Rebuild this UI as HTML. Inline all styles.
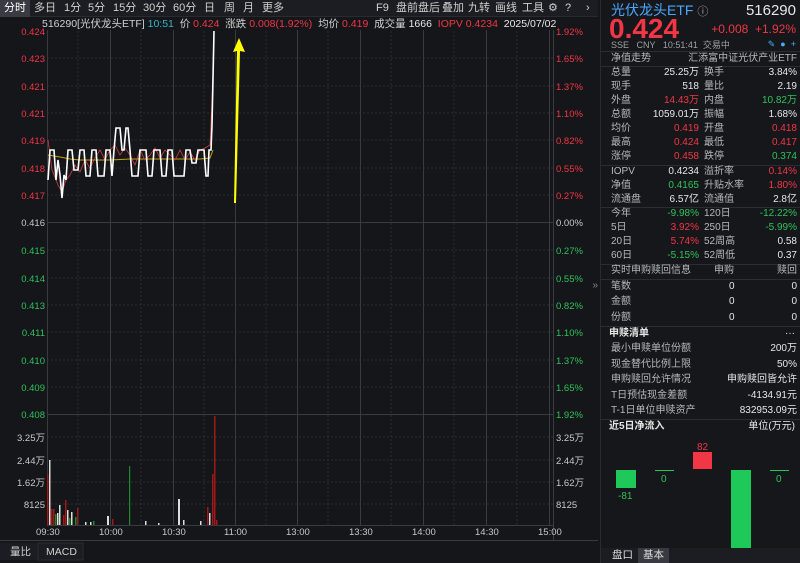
<!DOCTYPE html>
<html><head><meta charset="utf-8"><style>
*{margin:0;padding:0;box-sizing:border-box}
body{width:800px;height:563px;background:#15161a;color:#c8c8c8;font-family:"Liberation Sans","Noto Sans CJK SC",sans-serif;font-size:11px;position:relative;overflow:hidden}
.abs{position:absolute;white-space:nowrap;line-height:1.2}
.tb{position:absolute;top:0;left:0;width:598px;height:17px;background:#1c1d22;border-bottom:1px solid #2a2b30}
.tb span{position:absolute;top:2px;font-size:11px;color:#d0d0d0;line-height:13px}
.r{color:#f23645}.g{color:#2fc25b}.w{color:#e6e6e6}.gr{color:#a0a0a0}.c{color:#35b6c8}
.rp{position:absolute;left:600px;width:200px;top:0;height:563px;background:#16171b;border-left:1px solid #2a2b30}
.row{position:absolute;left:10px;width:186px;height:14px;line-height:14px;font-size:10px;color:#b8b8b8;white-space:nowrap}
.row b{font-weight:normal;position:absolute;top:0}
.row .v{right:98px}.row .l{left:93px}
.sep{position:absolute;left:0;width:200px;height:1px;background:#2c2d33}
</style></head><body>
<div class="tb">
<span style="left:0;top:0;width:30px;height:17px;background:#3a3b42;padding:2px 0 0 4px;color:#fff">分时</span>
<span style="left:34px">多日</span><span style="left:64px">1分</span><span style="left:88px">5分</span><span style="left:113px">15分</span><span style="left:143px">30分</span><span style="left:173px">60分</span><span style="left:204px">日</span><span style="left:224px">周</span><span style="left:243px">月</span><span style="left:262px">更多</span>
<span style="left:376px">F9</span><span style="left:396px">盘前盘后</span><span style="left:442px">叠加</span><span style="left:468px">九转</span><span style="left:495px">画线</span><span style="left:522px">工具</span><span style="left:548px">⚙</span><span style="left:565px">?</span><span style="left:586px">›</span>
</div>
<div class="abs" style="left:42px;top:18px;font-size:10.5px;color:#d0d0d0">516290[光伏龙头ETF] <span class="c">10:51</span> &nbsp;价 <span class="r">0.424</span> &nbsp;涨跌 <span class="r">0.008(1.92%)</span> &nbsp;均价 <span class="r">0.419</span> &nbsp;成交量 <span class="w">1666</span> &nbsp;<span class="r">IOPV 0.4234</span> &nbsp;<span class="w">2025/07/02</span></div>
<svg class="abs" style="left:0;top:0" width="600" height="563">
<g stroke="#2a2b30" stroke-dasharray="2,2" stroke-width="1">
<line x1="47" y1="58" x2="553" y2="58"/><line x1="47" y1="86" x2="553" y2="86"/><line x1="47" y1="113" x2="553" y2="113"/><line x1="47" y1="140" x2="553" y2="140"/><line x1="47" y1="168" x2="553" y2="168"/><line x1="47" y1="195" x2="553" y2="195"/>
<line x1="47" y1="250" x2="553" y2="250"/><line x1="47" y1="278" x2="553" y2="278"/><line x1="47" y1="305" x2="553" y2="305"/><line x1="47" y1="332" x2="553" y2="332"/><line x1="47" y1="360" x2="553" y2="360"/><line x1="47" y1="387" x2="553" y2="387"/>
<line x1="47" y1="437" x2="553" y2="437"/><line x1="47" y1="460" x2="553" y2="460"/><line x1="47" y1="482" x2="553" y2="482"/><line x1="47" y1="504" x2="553" y2="504"/>
<line x1="78" y1="31" x2="78" y2="525"/><line x1="141" y1="31" x2="141" y2="525"/><line x1="204" y1="31" x2="204" y2="525"/><line x1="266" y1="31" x2="266" y2="525"/><line x1="328" y1="31" x2="328" y2="525"/><line x1="391" y1="31" x2="391" y2="525"/><line x1="454" y1="31" x2="454" y2="525"/><line x1="517" y1="31" x2="517" y2="525"/>
</g>
<g stroke="#3a3b42" stroke-width="1">
<line x1="47.5" y1="30" x2="47.5" y2="525"/><line x1="110.5" y1="30" x2="110.5" y2="525"/><line x1="173.5" y1="30" x2="173.5" y2="525"/><line x1="235.5" y1="30" x2="235.5" y2="525"/><line x1="297.5" y1="30" x2="297.5" y2="525"/><line x1="360.5" y1="30" x2="360.5" y2="525"/><line x1="423.5" y1="30" x2="423.5" y2="525"/><line x1="486.5" y1="30" x2="486.5" y2="525"/><line x1="549.5" y1="30" x2="549.5" y2="525"/>
<line x1="47" y1="222.5" x2="553" y2="222.5"/><line x1="47" y1="414.5" x2="553" y2="414.5"/><line x1="47" y1="525.5" x2="553" y2="525.5"/>
<line x1="553.5" y1="30" x2="553.5" y2="540"/><line x1="0" y1="540.5" x2="598" y2="540.5"/>
</g>
<g font-size="9.5" fill="#f23645" text-anchor="end">
<text x="45" y="35">0.424</text><text x="45" y="62">0.423</text><text x="45" y="90">0.421</text><text x="45" y="117">0.421</text><text x="45" y="144">0.419</text><text x="45" y="172">0.418</text><text x="45" y="199">0.417</text>
<text x="45" y="226" fill="#c8c8c8">0.416</text>
</g>
<g font-size="9.5" fill="#2fc25b" text-anchor="end">
<text x="45" y="254">0.415</text><text x="45" y="282">0.414</text><text x="45" y="309">0.413</text><text x="45" y="336">0.411</text><text x="45" y="364">0.410</text><text x="45" y="391">0.409</text><text x="45" y="418">0.408</text>
</g>
<g font-size="9.5" fill="#f23645">
<text x="556" y="35">1.92%</text><text x="556" y="62">1.65%</text><text x="556" y="90">1.37%</text><text x="556" y="117">1.10%</text><text x="556" y="144">0.82%</text><text x="556" y="172">0.55%</text><text x="556" y="199">0.27%</text><text x="556" y="226" fill="#c8c8c8">0.00%</text>
</g>
<g font-size="9.5" fill="#2fc25b">
<text x="556" y="254">0.27%</text><text x="556" y="282">0.55%</text><text x="556" y="309">0.82%</text><text x="556" y="336">1.10%</text><text x="556" y="364">1.37%</text><text x="556" y="391">1.65%</text><text x="556" y="418">1.92%</text>
</g>
<g font-size="9.5" fill="#c8c8c8">
<text x="45" y="441" text-anchor="end">3.25万</text><text x="45" y="464" text-anchor="end">2.44万</text><text x="45" y="486" text-anchor="end">1.62万</text><text x="45" y="508" text-anchor="end">8125</text>
<text x="556" y="441">3.25万</text><text x="556" y="464">2.44万</text><text x="556" y="486">1.62万</text><text x="556" y="508">8125</text>
<text x="36" y="535">09:30</text><text x="99" y="535">10:00</text><text x="162" y="535">10:30</text><text x="224" y="535">11:00</text><text x="286" y="535">13:00</text><text x="349" y="535">13:30</text><text x="412" y="535">14:00</text><text x="475" y="535">14:30</text><text x="538" y="535">15:00</text>
</g>
<polyline fill="none" stroke="#c8a000" stroke-width="1" points="48,155 60,157 70,159 80,160 100,160 110,160 130,159 160,159 200,159 210,158 213,150"/>
<polyline fill="none" stroke="#d04040" stroke-width="0.8" points="48,140 52,170 58,185 62,192 66,180 70,175 75,165 80,172 85,160 90,168 95,158 100,150 105,160 110,150 115,145 120,155 125,148 130,155 135,165 140,150 145,160 150,155 155,148 160,158 165,150 170,155 175,160 180,150 185,160 190,152 195,160 200,150 205,148 210,145 212,100 214,40"/>
<polyline fill="none" stroke="#ffffff" stroke-width="1.6" points="48,180 50,150 54,150 56,180 58,160 60,175 62,198 64,175 66,180 68,150 72,150 74,170 78,170 80,150 84,150 86,176 90,176 92,150 96,150 98,176 104,176 106,150 110,150 112,176 114,150 116,128 120,128 122,150 124,150 126,128 128,128 130,150 132,176 138,176 140,150 146,150 148,176 152,176 154,150 160,150 162,176 166,176 168,150 172,150 174,176 184,176 186,150 190,150 192,163 196,163 198,150 204,150 206,176 208,176 209,150 211,150 212,125 214,31"/>
<polygon fill="#ffff00" points="239,38 233,52 237,51 234,203 236,203 240,51 245,52"/>
<g>
<rect x="47" y="475" width="1.5" height="50" fill="#a01818"/><rect x="49" y="460" width="1.5" height="65" fill="#ddd"/><rect x="51" y="509" width="1.5" height="16" fill="#a01818"/><rect x="53" y="509" width="1.5" height="16" fill="#a01818"/><rect x="55" y="514" width="1.5" height="11" fill="#1a8a2a"/><rect x="57" y="513" width="1.5" height="12" fill="#ddd"/><rect x="59" y="505" width="1.5" height="20" fill="#ddd"/><rect x="63" y="515" width="1.5" height="10" fill="#a01818"/><rect x="65" y="500" width="1.5" height="25" fill="#a01818"/><rect x="67" y="510" width="1.5" height="15" fill="#ddd"/><rect x="69" y="518" width="1.5" height="7" fill="#1a8a2a"/><rect x="71" y="512" width="1.5" height="13" fill="#ddd"/><rect x="75" y="517" width="1.5" height="8" fill="#1a8a2a"/><rect x="77" y="508" width="1.5" height="17" fill="#a01818"/><rect x="85" y="522" width="1.5" height="3" fill="#ddd"/><rect x="90" y="522" width="1.5" height="3" fill="#ddd"/><rect x="93" y="521" width="1.5" height="4" fill="#1a8a2a"/><rect x="107" y="516" width="2" height="9" fill="#ddd"/><rect x="112" y="519" width="1.5" height="6" fill="#a01818"/><rect x="129" y="466" width="1.2" height="59" fill="#1a8a2a"/><rect x="145" y="521" width="1.5" height="4" fill="#ddd"/><rect x="158" y="523" width="1.5" height="2" fill="#ddd"/><rect x="178" y="499" width="2" height="26" fill="#ddd"/><rect x="183" y="520" width="1.5" height="5" fill="#ddd"/><rect x="200" y="521" width="1.5" height="4" fill="#ddd"/><rect x="207" y="507" width="1.5" height="18" fill="#a01818"/><rect x="209" y="513" width="1.5" height="12" fill="#ddd"/><rect x="212" y="474" width="1.5" height="51" fill="#a01818"/><rect x="214" y="416" width="1.5" height="109" fill="#a01818"/><rect x="216" y="520" width="1.5" height="5" fill="#a01818"/>
</g>
<rect x="0" y="543" width="38" height="17" fill="#1c1d22"/><rect x="38" y="543" width="45" height="17" fill="#1c1d22" stroke="#2a2b30"/>
<text x="10" y="555" font-size="10.5" fill="#d0d0d0">量比</text><text x="46" y="555" font-size="10.5" fill="#d0d0d0">MACD</text>
<text x="598" y="288" font-size="10" fill="#888" text-anchor="end">»</text>
</svg>

<div class="rp">
<div class="abs" style="left:10px;top:2px;font-size:14px;line-height:17px;color:#4aa8ff">光伏龙头ETF <span style="font-size:11px;color:#aaa">ⓘ</span></div>
<div class="abs" style="right:4px;top:2px;font-size:15px;line-height:17px;color:#e6e6e6">516290</div>
<div class="abs r" style="left:8px;top:17px;font-size:28px;line-height:24px;font-weight:bold">0.424</div>
<div class="abs r" style="right:4px;top:22px;font-size:12px;line-height:14px">+0.008 &nbsp;+1.92%</div>
<div class="abs gr" style="left:10px;top:40px;font-size:9px;line-height:10px">SSE &nbsp; CNY &nbsp; 10:51:41 &nbsp;交易中</div>
<div class="abs" style="right:4px;top:39px;font-size:9px;line-height:10px;color:#4aa8ff">✎ &nbsp;● &nbsp;+</div>
<div class="sep" style="top:51px"></div>
<div class="row" style="top:52px">净值走势<b style="right:0">汇添富中证光伏产业ETF</b></div>
<div class="sep" style="top:66px"></div>
<div class="row" style="top:66px">总量<b class="v w">25.25万</b><b class="l">换手</b><b style="right:0" class="w">3.84%</b></div>
<div class="row" style="top:80px">现手<b class="v w">518</b><b class="l">量比</b><b style="right:0" class="w">2.19</b></div>
<div class="row" style="top:94px">外盘<b class="v r">14.43万</b><b class="l">内盘</b><b style="right:0" class="g">10.82万</b></div>
<div class="row" style="top:108px">总额<b class="v w">1059.01万</b><b class="l">振幅</b><b style="right:0" class="w">1.68%</b></div>
<div class="row" style="top:122px">均价<b class="v r">0.419</b><b class="l">开盘</b><b style="right:0" class="r">0.418</b></div>
<div class="row" style="top:136px">最高<b class="v r">0.424</b><b class="l">最低</b><b style="right:0" class="r">0.417</b></div>
<div class="row" style="top:150px">涨停<b class="v r">0.458</b><b class="l">跌停</b><b style="right:0" class="g">0.374</b></div>
<div class="sep" style="top:165px"></div>
<div class="row" style="top:165px">IOPV<b class="v w">0.4234</b><b class="l">溢折率</b><b style="right:0" class="r">0.14%</b></div>
<div class="row" style="top:179px">净值<b class="v g">0.4165</b><b class="l">升贴水率</b><b style="right:0" class="r">1.80%</b></div>
<div class="row" style="top:193px">流通盘<b class="v w">6.57亿</b><b class="l">流通值</b><b style="right:0" class="w">2.8亿</b></div>
<div class="sep" style="top:207px"></div>
<div class="row" style="top:207px">今年<b class="v g">-9.98%</b><b class="l">120日</b><b style="right:0" class="g">-12.22%</b></div>
<div class="row" style="top:221px">5日<b class="v r">3.92%</b><b class="l">250日</b><b style="right:0" class="g">-5.99%</b></div>
<div class="row" style="top:235px">20日<b class="v r">5.74%</b><b class="l">52周高</b><b style="right:0" class="w">0.58</b></div>
<div class="row" style="top:249px">60日<b class="v g">-5.15%</b><b class="l">52周低</b><b style="right:0" class="w">0.37</b></div>
<div class="sep" style="top:264px"></div>
<div class="row" style="top:264px">实时申购赎回信息<b style="left:103px">申购</b><b style="right:0">赎回</b></div>
<div class="sep" style="top:279px"></div>
<div class="row" style="top:280px">笔数<b style="left:118px" class="w">0</b><b style="right:0" class="w">0</b></div>
<div class="row" style="top:295px">金额<b style="left:118px" class="w">0</b><b style="right:0" class="w">0</b></div>
<div class="row" style="top:311px">份额<b style="left:118px" class="w">0</b><b style="right:0" class="w">0</b></div>
<div class="sep" style="top:326px"></div>
<div class="row" style="top:327px;left:8px;color:#e6e6e6;font-weight:bold">申赎清单<b style="right:0">···</b></div>
<div class="row" style="top:342px">最小申赎单位份额<b style="right:0" class="w">200万</b></div>
<div class="row" style="top:358px">现金替代比例上限<b style="right:0" class="w">50%</b></div>
<div class="row" style="top:373px">申购赎回允许情况<b style="right:0" class="w">申购赎回皆允许</b></div>
<div class="row" style="top:389px">T日预估现金差额<b style="right:0" class="w">-4134.91元</b></div>
<div class="row" style="top:404px">T-1日单位申赎资产<b style="right:0" class="w">832953.09元</b></div>
<div class="sep" style="top:419px"></div>
<div class="row" style="top:420px;left:8px;color:#e6e6e6;font-weight:bold">近5日净流入<b style="right:0">单位(万元)</b></div>
<div class="abs" style="left:15px;top:470px;width:20px;height:18px;background:#1ec95a"></div>
<div class="abs g" style="left:17px;top:491px;font-size:10px">-81</div>
<div class="abs" style="left:54px;top:470px;width:19px;height:1px;background:#1ec95a"></div>
<div class="abs g" style="left:60px;top:474px;font-size:10px">0</div>
<div class="abs r" style="left:96px;top:442px;font-size:10px">82</div>
<div class="abs" style="left:92px;top:452px;width:19px;height:17px;background:#f23645"></div>
<div class="abs" style="left:130px;top:470px;width:20px;height:78px;background:#1ec95a"></div>
<div class="abs" style="left:169px;top:470px;width:19px;height:1px;background:#1ec95a"></div>
<div class="abs g" style="left:175px;top:474px;font-size:10px">0</div>
<div class="abs" style="left:0;top:548px;width:200px;height:15px;background:#1c1d22"></div>
<div class="abs" style="left:37px;top:548px;width:31px;height:15px;background:#3a3b42"></div>
<div class="abs" style="left:11px;top:549px;font-size:10.5px;color:#ddd">盘口</div>
<div class="abs" style="left:42px;top:549px;font-size:10.5px;color:#ddd">基本</div>
</div>
</body></html>
